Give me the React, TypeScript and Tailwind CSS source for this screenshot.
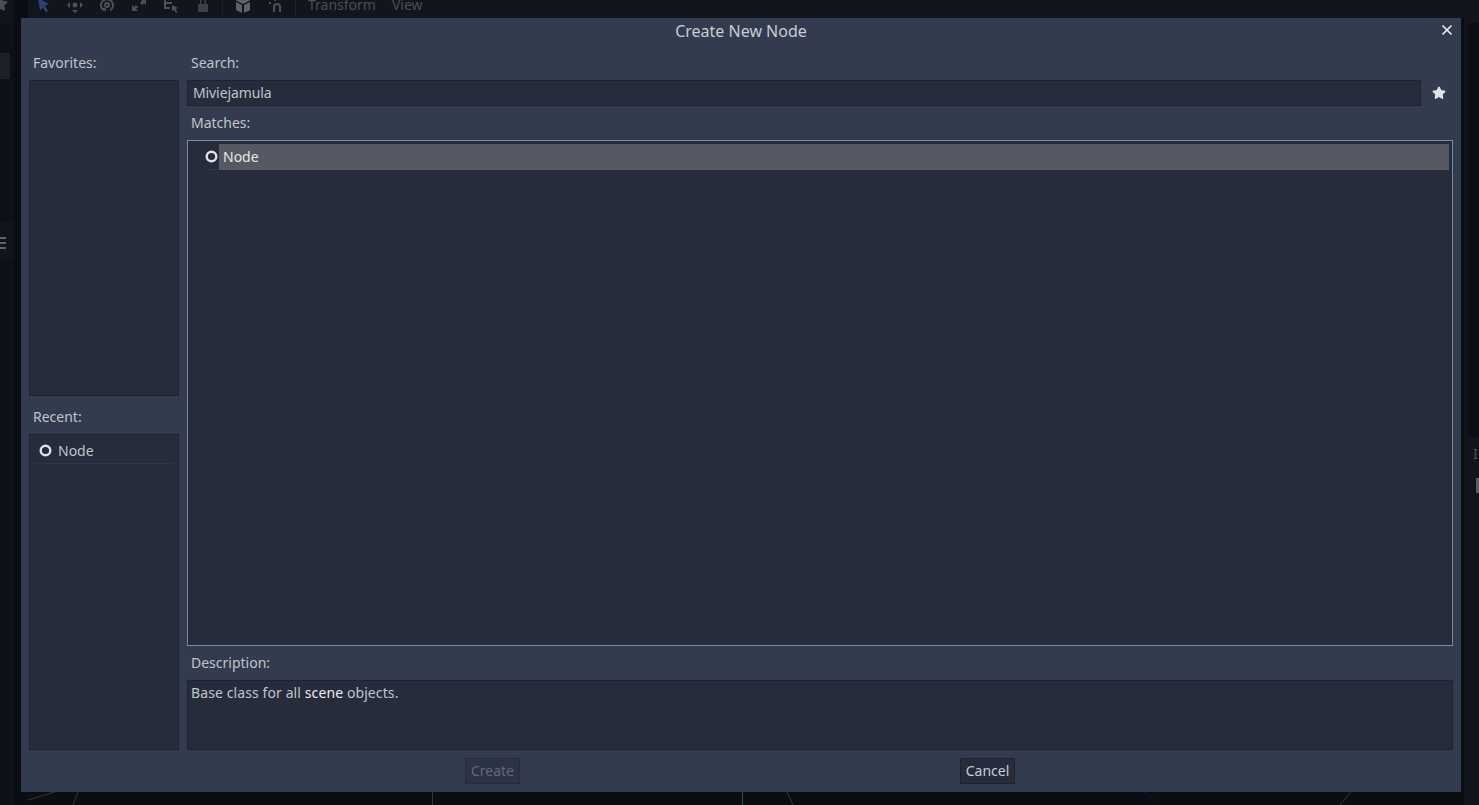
import { Star, X } from "lucide-react";

const font = { fontFamily: '"Noto Sans", sans-serif' };

function NodeIcon() {
  return (
    <svg viewBox="0 0 13 13" className="w-[13px] h-[13px] shrink-0" fill="none" stroke="#dfe1e5" strokeWidth="2.4">
      <circle cx="6.500" cy="6.500" r="4.800" />
    </svg>
  );
}

function ToolIcons() {
  return (
    <div className="flex items-center h-[18px] ml-[28px] pl-[7px] bg-[#12151d] text-[#4d5057] overflow-hidden">
      <svg viewBox="0 0 16 16" className="w-4 h-4 -mt-2" fill="#2b4470">
        <path d="M3 1 14 7 10 9 13 14 11 15.500 8 10.500 5 13.500z" />
      </svg>
      <svg viewBox="0 0 16 16" className="w-4 h-4 -mt-2 ml-4" fill="currentColor">
        <circle cx="8" cy="8" r="2.500" />
        <path d="M8 0 11 3H5zM8 16 5 13H11zM0 8 3 5V11zM16 8 13 11V5z" />
      </svg>
      <svg viewBox="0 0 16 16" className="w-4 h-4 -mt-2 ml-4" fill="none" stroke="currentColor" strokeWidth="2">
        <path d="M5 13.500A6 6 0 1 1 11 13.500" />
        <circle cx="8" cy="8" r="2" />
        <path d="M3 11h4v4z" fill="currentColor" stroke="none" />
      </svg>
      <svg viewBox="0 0 16 16" className="w-4 h-4 -mt-2 ml-4" fill="currentColor">
        <path d="M9 2h6v6l-2-2-2 2-2-2 2-2zM1 8l2 2 2-2 2 2-2 2 2 2H1z" />
      </svg>
      <svg viewBox="0 0 16 16" className="w-4 h-4 -mt-2 ml-4" fill="currentColor">
        <path d="M1 0h9v2H3v3h6v2H3v3h4v2H1z" />
        <path d="M9 8l6 3-2.500 1 2 3-1.500 1-2-3L9 14z" />
      </svg>
      <svg viewBox="0 0 16 16" className="w-4 h-4 -mt-2 ml-4" fill="#3d4047">
        <path d="M3 7h10v8H3zM5 7V4a3 3 0 0 1 6 0v3H9.500V4a1.500 1.500 0 0 0-3 0v3z" />
      </svg>
      <span className="w-px h-[18px] ml-[11px] bg-[#1d2129]" />
      <svg viewBox="0 0 16 16" className="w-4 h-4 -mt-2 ml-3" fill="#5f6268">
        <path d="M8 0 15 3.500 8 7 1 3.500zM1 5l6 3v8l-6-3zM15 5v8l-6 3V8z" />
      </svg>
      <svg viewBox="0 0 16 16" className="w-4 h-4 -mt-2 ml-4" fill="none" stroke="currentColor" strokeWidth="2">
        <path d="M7 15V10a3 3 0 0 1 6 0v5M3 0v2M3 5v2M7 3h2" />
      </svg>
      <span className="w-px h-[18px] ml-3 bg-[#1d2129]" />
      <span className="ml-3 -mt-2 text-sm text-[#4a4e56]">Transform</span>
      <span className="ml-4 -mt-2 text-sm text-[#4a4e56]">View</span>
    </div>
  );
}

export default function App() {
  return (
    <div className="relative w-[1479px] h-[805px] overflow-hidden bg-[#0a0d12] text-sm text-[#c1c4cb]" style={font}>
      <ToolIcons />

      {/* dimmed editor behind the dialog */}
      <div className="absolute left-0 top-0 w-[18px] h-[805px] bg-[#11141b]">
        <div className="h-[23px]" />
        <div className="relative h-[199px] bg-[#0d1016]">
          <div className="absolute left-0 top-[30px] w-[10px] h-[26px] bg-[#1d2026]" />
        </div>
        <div className="h-[38px] pt-[15px] flex flex-col gap-[3px]">
          <span className="w-[6px] h-[2px] bg-[#5f6268]" />
          <span className="w-[6px] h-[2px] bg-[#5f6268]" />
          <span className="w-[6px] h-[2px] bg-[#5f6268]" />
        </div>
        <div className="h-[545px] bg-[#0d1016]" />
      </div>
      <Star className="absolute left-[-8px] top-[-4px] w-4 h-4 text-[#4a4d55] fill-[#4a4d55]" />
      <div className="absolute left-[14px] top-0 w-[4px] h-[805px] bg-[#0a0d12]" />

      <div className="absolute left-[1464px] top-0 w-[15px] h-[805px] bg-[#11141b]">
        <div className="h-[23px]" />
        <div className="h-[414px] ml-1 bg-[#0b0e13]" />
      </div>
      <span className="absolute left-[1473px] top-[444px] text-sm text-[#4f535b]">I</span>
      <div className="absolute left-[1476px] top-[478px] w-[3px] h-[15px] bg-[#5a5d65]" />

      {/* 2d viewport lines under the dialog */}
      <svg viewBox="0 0 1479 14" className="absolute left-0 top-[791px] w-[1479px] h-[14px]" fill="none" stroke="#33363d">
        <path d="M28 9 55 1M78 1 73 14M432.500 1V14M787 1 793 14M1351 1 1340 14" />
        <path d="M742.500 1V14" stroke="#1f5a2c" />
        <path d="M1145 1 1155 10" stroke="#14144a" />
      </svg>

      <div className="absolute left-[21px] top-[18px] w-[1440px] h-[774px] bg-[#333b4f] flex flex-col">
        <div className="relative h-[26px] flex items-center justify-center text-base text-[#c9ccd2]">
          Create New Node
          <X className="absolute right-[6px] top-[4px] w-[16px] h-[16px] text-[#eef0f3]" strokeWidth={2.5} />
        </div>

        <div className="flex gap-2 pl-2 pr-2 pt-[8px]">
          <div className="w-[150px] flex flex-col">
            <div className="h-[28px] pl-1 leading-[20px] pt-px">Favorites:</div>
            <div className="h-[316px] bg-[#262c3b] border border-[#1e2330]" />
            <div className="h-[38px] pl-1 pt-[11px] leading-[20px]">Recent:</div>
            <div className="h-[316px] bg-[#262c3b] border border-[#1e2330] pt-[3px] px-[3px]">
              <div className="h-[26px] flex items-center gap-[6px] pl-[6px] border-b border-[#2e3546]">
                <NodeIcon />
                <span>Node</span>
              </div>
            </div>
          </div>

          <div className="flex-1 flex flex-col">
            <div className="h-[28px] pl-1 leading-[20px] pt-px">Search:</div>
            <div className="flex h-[26px] items-center">
              <div className="w-[1234px] h-[26px] bg-[#262c3b] border border-[#1e2330] pl-[5px] leading-[24px] tracking-[-0.1px]">Miviejamula</div>
              <Star className="w-[14px] h-[14px] ml-[11px] text-[#e0e2e6] fill-[#e0e2e6]" />
            </div>
            <div className="h-[34px] pl-1 pt-[7px] leading-[20px]">Matches:</div>
            <div className="h-[506px] bg-[#262c3b] border border-[#7f8798] p-[3px]">
              <div className="flex h-[26px] items-center pl-[14px]">
                <span className="flex h-full items-center pr-px border-b border-[#2e3546]">
                  <NodeIcon />
                </span>
                <span className="flex-1 h-full bg-[#565963] pl-[4px] leading-[26px] text-[#e6e7ea]">Node</span>
              </div>
            </div>
            <div className="h-[34px] pl-1 pt-[7px] leading-[20px]">Description:</div>
            <div className="h-[70px] bg-[#262c3b] border border-[#1e2330] pl-[3px] pt-[2px] leading-[20px] tracking-[0.1px]">
              Base class for all <span className="text-[#eceef1]">scene</span> objects.
            </div>
          </div>
        </div>

        <div className="flex mt-2">
          <button className="ml-[444px] w-[55px] h-[26px] bg-[#2c3344] border border-[#262c3b] text-[#62677a]">Create</button>
          <button className="ml-[440px] w-[55px] h-[26px] bg-[#262c3b] border border-[#1e2330] text-[#c9ccd2]">Cancel</button>
        </div>
      </div>
    </div>
  );
}
